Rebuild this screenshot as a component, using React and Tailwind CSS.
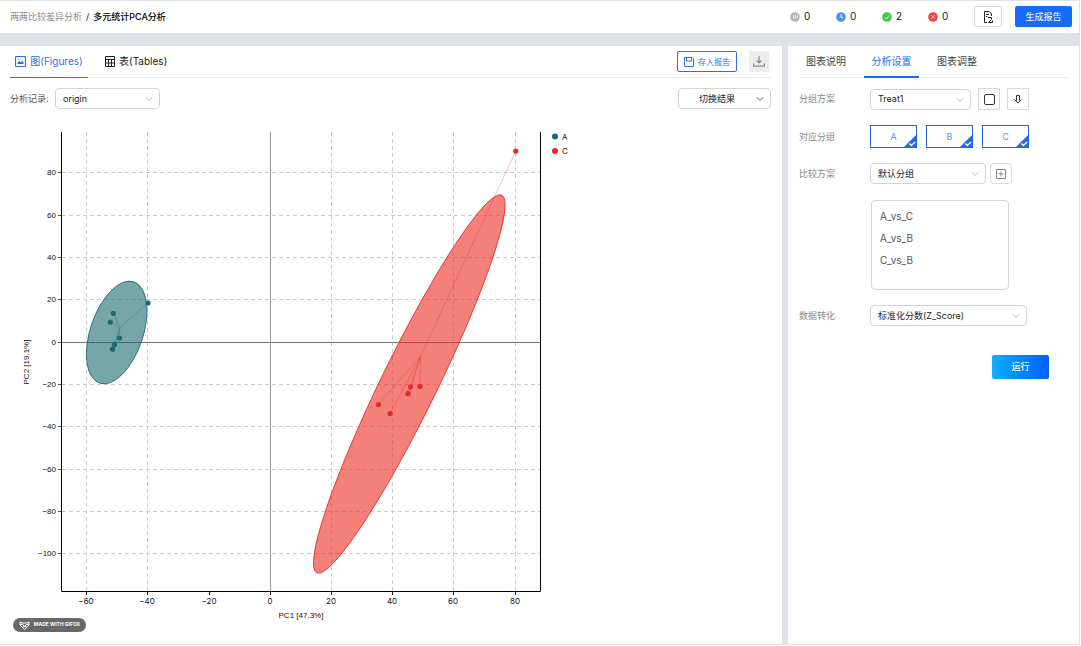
import { ChevronDown } from "lucide-react";

const STATUS_COUNTS = [
    { key: "waiting", label: "等待", color: "#b5b5b5", count: 0 },
    { key: "running", label: "运行中", color: "#4b93ec", count: 0 },
    { key: "success", label: "成功", color: "#3dcc4a", count: 2 },
    { key: "failed", label: "失败", color: "#fb4238", count: 0 },
];

const GROUPS = ["A", "B", "C"];

const COMPARISONS = ["A_vs_C", "A_vs_B", "C_vs_B"];

// pixel position of every tick inside the chart svg
const X_TICKS = [
    { value: "−60", x: 86 },
    { value: "−40", x: 147 },
    { value: "−20", x: 209 },
    { value: "0", x: 270 },
    { value: "20", x: 331 },
    { value: "40", x: 392 },
    { value: "60", x: 453 },
    { value: "80", x: 515 },
];

const Y_TICKS = [
    { value: "80", y: 52 },
    { value: "60", y: 95 },
    { value: "40", y: 137 },
    { value: "20", y: 179 },
    { value: "0", y: 222 },
    { value: "−20", y: 264 },
    { value: "−40", y: 306 },
    { value: "−60", y: 349 },
    { value: "−80", y: 391 },
    { value: "−100", y: 433 },
];

const SERIES = [
    {
        name: "A",
        color: "#1b6a6c",
        fill: "#1b6a6c",
        ellipse: { cx: 116.7, cy: 212.5, rx: 53.5, ry: 26.4, angle: -71.4 },
        center: [119.7, 208],
        points: [[148, 183], [113.3, 193.3], [110.3, 202], [119.5, 218], [114.5, 224.7], [112.5, 229.3]],
    },
    {
        name: "C",
        color: "#e42a25",
        fill: "#eb2b20",
        ellipse: { cx: 409.3, cy: 263.9, rx: 210.2, ry: 27.8, angle: -63.9 },
        center: [420.5, 236.5],
        points: [[515.8, 31], [410.5, 266.8], [420, 266.3], [408, 273.7], [378.5, 284.5], [390, 293.6]],
    },
];

const StatusIcon = ({ type, color }) => (
    <svg viewBox="0 0 10 10" className="h-[10px] w-[10px]" fill="none" stroke="#fff">
        <circle cx="5" cy="5" r="4.8" fill={color} stroke="none" />
        {type === "waiting" && <path d="M3.5 3v3h1.5M5.5 3v2.5h2.3M7.5 3.2v2" strokeWidth="0.7" />}
        {type === "running" && <path d="M5 2.2v3.3h2" />}
        {type === "success" && <path d="M2.8 5.3l1.6 1.6 3-3.4" strokeWidth="0.8" />}
        {type === "failed" && <path d="M3.2 3.2l3.6 3.6M6.8 3.2L3.2 6.8" strokeWidth="0.7" />}
    </svg>
);

const ReportIcon = () => (
    <svg viewBox="0 0 10 12" className="h-3 w-[10px]" fill="none" stroke="#222">
        <path d="M4 11.5H1.5V.5h4.7L8.5 3v2" />
        <path d="M3 3.5h3M3 5.5h1.5" />
        <path d="M5 6.5h3.5v2L5.5 11.5h4v-2" />
    </svg>
);

const PictureIcon = () => (
    <svg viewBox="0 0 11 11" className="h-[11px] w-[11px]" fill="none" stroke="currentColor">
        <rect x="0.5" y="0.5" width="10" height="10" rx="1" strokeWidth="1.2" />
        <path d="M2.5 8V6.6l1.8-1.6 1.5 1.2L7.3 5l1.3 1.6V8z" fill="currentColor" stroke="none" />
        <circle cx="3.5" cy="3.5" r="0.6" fill="currentColor" stroke="none" />
    </svg>
);

const TableIcon = () => (
    <svg viewBox="0 0 10 11" className="h-[11px] w-[10px]" fill="none" stroke="#222">
        <path d="M0.5 0.5h9v10h-9zM0.5 3.5h9M0.5 7h9M3.5 3.5v7M6.5 3.5v7" />
    </svg>
);

const SaveIcon = () => (
    <svg viewBox="0 0 10 10" className="h-[10px] w-[10px]" fill="none" stroke="currentColor">
        <path d="M0.5 0.5h8l1 1v8h-9zM2.5 0.5v3.5h5v-3.5" />
    </svg>
);

const DownloadIcon = () => (
    <svg viewBox="0 0 12 11" className="h-[11px] w-[12px]" fill="none" stroke="#8c8c8c" strokeWidth="1.2">
        <path d="M6 0v6.5M3.6 4.5L6 7l2.4-2.5M0.6 7.5v2.7h10.8V7.5" />
    </svg>
);

const SquareIcon = () => (
    <svg viewBox="0 0 11 11" className="h-[11px] w-[11px]" fill="none" stroke="#333">
        <rect x="0.5" y="0.5" width="10" height="10" rx="1.5" />
    </svg>
);

const ArrowDownIcon = () => (
    <svg viewBox="0 0 8 9" className="h-[9px] w-2" fill="none" stroke="#333">
        <path d="M2.5 5.5V.5h3v5M0.5 4.5L4 8l3.5-3.5" />
    </svg>
);

const PlusBoxIcon = () => (
    <svg viewBox="0 0 10 10" className="h-[10px] w-[10px]" fill="none" stroke="#888">
        <path d="M0.5 0.5h9v9h-9zM5 2.5v5M2.5 5h5" />
    </svg>
);

const FoxIcon = () => (
    <svg viewBox="0 0 11 9" className="h-[9px] w-[11px]" fill="none" stroke="#fff" strokeLinejoin="round">
        <path d="M1 1L3.5 2h4L10 1v3L5.5 8.2 1 4z" />
        <path d="M1 4l2.2-1 2.3 2.6L7.8 3 10 4M3.5 6l2-0.8 2 0.8" />
    </svg>
);

const SelectBox = ({ id, label, options, className, chevron = "text-gray-400" }) => (
    <div className={`relative ${className}`}>
        <select
            id={id}
            aria-label={label}
            className="block h-[21px] w-full appearance-none rounded border border-[#d4d4d4] bg-white pr-5 pl-[7px] text-[9px] text-[#222]"
        >
            {options.map((option) => (
                <option key={option}>{option}</option>
            ))}
        </select>
        <ChevronDown strokeWidth={1.5} className={`pointer-events-none absolute top-[5px] right-[5px] h-3 w-3 ${chevron}`} />
    </div>
);

const Header = () => (
    <header className="flex h-8 items-center bg-white pr-[7px] pb-px pl-[10px]">
        <nav className="flex flex-1 gap-1 text-[9px]">
            <a href="#compare" className="text-[#8c8c8c]">两两比较差异分析</a>
            <span>/</span>
            <span className="font-medium text-black">多元统计PCA分析</span>
        </nav>
        <div className="flex">
            {STATUS_COUNTS.map((item) => (
                <span key={item.key} title={item.label} className="flex w-[46px] items-center gap-1">
                    <StatusIcon type={item.key} color={item.color} />
                    <span>{item.count}</span>
                </span>
            ))}
        </div>
        <div className="flex gap-[13px]">
            <button aria-label="报告" className="flex h-[21px] w-7 items-center justify-center rounded-xs border border-[#d9d9d9]">
                <ReportIcon />
            </button>
            <button className="h-[21px] w-[57px] rounded-xs bg-[#176cff] text-[9px] text-white">生成报告</button>
        </div>
    </header>
);

const PcaChart = () => (
    <svg width="600" height="498" viewBox="0 0 600 498" className="block overflow-visible" fontFamily="Inter, sans-serif" fontSize="8">
        {X_TICKS.map((tick) => (
            <g key={tick.value} stroke="#111">
                {tick.value !== "−20" && (
                    <line
                        x1={tick.x + 0.5}
                        x2={tick.x + 0.5}
                        y1="12"
                        y2="471"
                        stroke={tick.value === "0" ? "#999" : "#ccc"}
                        strokeDasharray={tick.value === "0" ? undefined : "4 3"}
                    />
                )}
                <line x1={tick.x + 0.5} x2={tick.x + 0.5} y1="471" y2="475" />
                <text x={tick.x} y="484" textAnchor="middle" fill="#111" stroke="none">{tick.value}</text>
            </g>
        ))}
        {Y_TICKS.map((tick) => (
            <g key={tick.value} stroke="#555">
                <line
                    x1="62"
                    x2="540"
                    y1={tick.y + 0.5}
                    y2={tick.y + 0.5}
                    stroke={tick.value === "0" ? "#777" : "#ccc"}
                    strokeDasharray={tick.value === "0" ? undefined : "4 3"}
                />
                <line x1="58" x2="61" y1={tick.y + 0.5} y2={tick.y + 0.5} />
                <text x="56" y={tick.y + 3} textAnchor="end" fill="#111" stroke="none" fontFamily="Liberation Sans, sans-serif">{tick.value}</text>
            </g>
        ))}

        {SERIES.map(({ name, color, fill, ellipse, center, points }) => (
            <g key={name} fill={color}>
                <ellipse
                    cx={ellipse.cx}
                    cy={ellipse.cy}
                    rx={ellipse.rx}
                    ry={ellipse.ry}
                    transform={`rotate(${ellipse.angle} ${ellipse.cx} ${ellipse.cy})`}
                    fill={fill}
                    fillOpacity="0.6"
                    stroke={color}
                    strokeWidth="0.8"
                />
                {points.map(([x, y]) => (
                    <line key={`${x}-${y}`} x1={center[0]} y1={center[1]} x2={x} y2={y} stroke={color} strokeOpacity="0.3" />
                ))}
                {points.map(([x, y]) => (
                    <circle key={`${x}-${y}`} cx={x} cy={y} r="2.6" />
                ))}
            </g>
        ))}

        <path d="M61.5 12V471.5H540.5V12" fill="none" stroke="#000" />
        <g fill="#111" textAnchor="middle" fontFamily="Liberation Sans, sans-serif">
            <text x="301" y="498">PC1 [47.3%]</text>
            <text x="29" y="242" transform="rotate(-90 29 242)">PC2 [19.1%]</text>
        </g>

        {SERIES.map(({ name, color }, index) => (
            <g key={name}>
                <circle cx="555" cy={16.5 + index * 14.5} r="3" fill={color} />
                <text x="562" y={19.5 + index * 14.5} fill="#111">{name}</text>
            </g>
        ))}
    </svg>
);

const ResultPanel = () => (
    <main className="flex min-w-0 flex-1 flex-col bg-white">
        <div className="mr-[11px] ml-[10px] flex h-8 items-stretch border-b border-[#ececec]">
            <button className="-mb-px flex w-[78px] items-center justify-center gap-1 border-b border-[#2a70ee] text-[#2a70ee]">
                <PictureIcon />
                图(Figures)
            </button>
            <button className="ml-[17px] flex items-center gap-1">
                <TableIcon />
                表(Tables)
            </button>
            <div className="ml-auto flex items-center gap-3 pr-[2px]">
                <button className="flex h-[21px] w-[60px] items-center justify-center gap-1 rounded-xs border border-[#2a70ee] text-[8px] text-[#2a70ee]">
                    <SaveIcon />
                    存入报告
                </button>
                <button aria-label="下载" className="flex h-[21px] w-5 items-center justify-center bg-[#ececec]">
                    <DownloadIcon />
                </button>
            </div>
        </div>
        <div className="flex items-center pt-[10px] pr-[11px] pl-[10px]">
            <label htmlFor="record" className="w-[45px] text-[9px] text-[#555]">分析记录:</label>
            <SelectBox id="record" options={["origin"]} className="w-[105px]" />
            <SelectBox label="切换结果" options={["切换结果"]} className="ml-auto w-[93px] [&>select]:pl-5" chevron="text-[#333]" />
        </div>
        <div className="pt-[11px]">
            <PcaChart />
        </div>
        <div className="mt-auto mb-3 ml-[13px] flex h-[14px] w-[73px] items-center justify-center gap-1 rounded-full bg-[#686868] text-[5px] font-bold text-white">
            <FoxIcon />
            MADE WITH GIFOX
        </div>
    </main>
);

const SettingRow = ({ label, htmlFor, children }) => (
    <div className="flex items-center">
        <label htmlFor={htmlFor} className="w-[71px] text-[9px] text-[#888]">{label}</label>
        <div className="flex items-center">{children}</div>
    </div>
);

const SettingPanel = () => (
    <aside className="w-[291px] shrink-0 bg-white pr-[11px] pl-[11px]">
        <div className="flex h-8 border-b border-[#ececec]">
            <button className="w-[54px] text-[#444]">图表说明</button>
            <button className="-mb-px ml-[11px] w-[55px] border-b-2 border-[#176cff] text-[#176cff]">分析设置</button>
            <button className="ml-[11px] w-[54px] text-[#444]">图表调整</button>
        </div>
        <div className="pt-[10px]">
            <SettingRow label="分组方案" htmlFor="treat">
                <SelectBox id="treat" options={["Treat1"]} className="w-[101px]" />
                <button aria-label="编辑" className="ml-[7px] flex h-[22px] w-[22px] items-center justify-center border border-[#d9d9d9]">
                    <SquareIcon />
                </button>
                <button aria-label="导入" className="ml-[7px] flex h-[22px] w-[22px] items-center justify-center border border-[#d9d9d9]">
                    <ArrowDownIcon />
                </button>
            </SettingRow>
        </div>
        <fieldset className="flex items-center pt-[15px]">
            <span className="w-[71px] text-[9px] text-[#888]">对应分组</span>
            <div className="flex gap-[9px]">
                {GROUPS.map((group) => (
                    <label key={group} className="relative flex h-[23px] w-[47px] items-center justify-center border border-[#2465d8] text-[9px] text-[#5b92ee]">
                        <input type="checkbox" defaultChecked className="sr-only" />
                        {group}
                        <svg viewBox="0 0 12 12" className="absolute right-0 bottom-0 h-3 w-3">
                            <path d="M12 0V12H0z" fill="#1d6bf5" />
                            <path d="M5.5 8.5L7.5 10.5L11 7" fill="none" stroke="#fff" strokeWidth="1.4" />
                        </svg>
                    </label>
                ))}
            </div>
        </fieldset>
        <div className="pt-[15px]">
            <SettingRow label="比较方案" htmlFor="compare">
                <SelectBox id="compare" options={["默认分组"]} className="w-[116px]" />
                <button aria-label="新增" className="ml-1 flex h-[21px] w-[22px] items-center justify-center rounded border border-[#d9d9d9]">
                    <PlusBoxIcon />
                </button>
            </SettingRow>
        </div>
        <ul className="mt-4 ml-[72px] h-[90px] w-[138px] rounded border border-[#d4d4d4] px-2 pt-1 text-[#555]">
            {COMPARISONS.map((name) => (
                <li key={name} className="h-[22px] leading-[22px]">{name}</li>
            ))}
        </ul>
        <div className="pt-[15px]">
            <SettingRow label="数据转化" htmlFor="transform">
                <SelectBox id="transform" options={["标准化分数(Z_Score)"]} className="w-[157px]" />
            </SettingRow>
        </div>
        <button className="mt-[29px] ml-[193px] block h-6 w-[57px] rounded-xs bg-linear-to-r from-[#19adff] to-[#005eff] text-[9px] font-medium text-white">
            运行
        </button>
    </aside>
);

export default function App() {
    return (
        <div className="flex min-h-screen flex-col border-r border-b border-white bg-[#dee2e8] py-px pr-px font-[Inter,'Noto_Sans_CJK_SC',sans-serif] text-[10px] text-[#222]">
            <Header />
            <div className="mt-[13px] flex flex-1 gap-[6px]">
                <ResultPanel />
                <SettingPanel />
            </div>
        </div>
    );
}
